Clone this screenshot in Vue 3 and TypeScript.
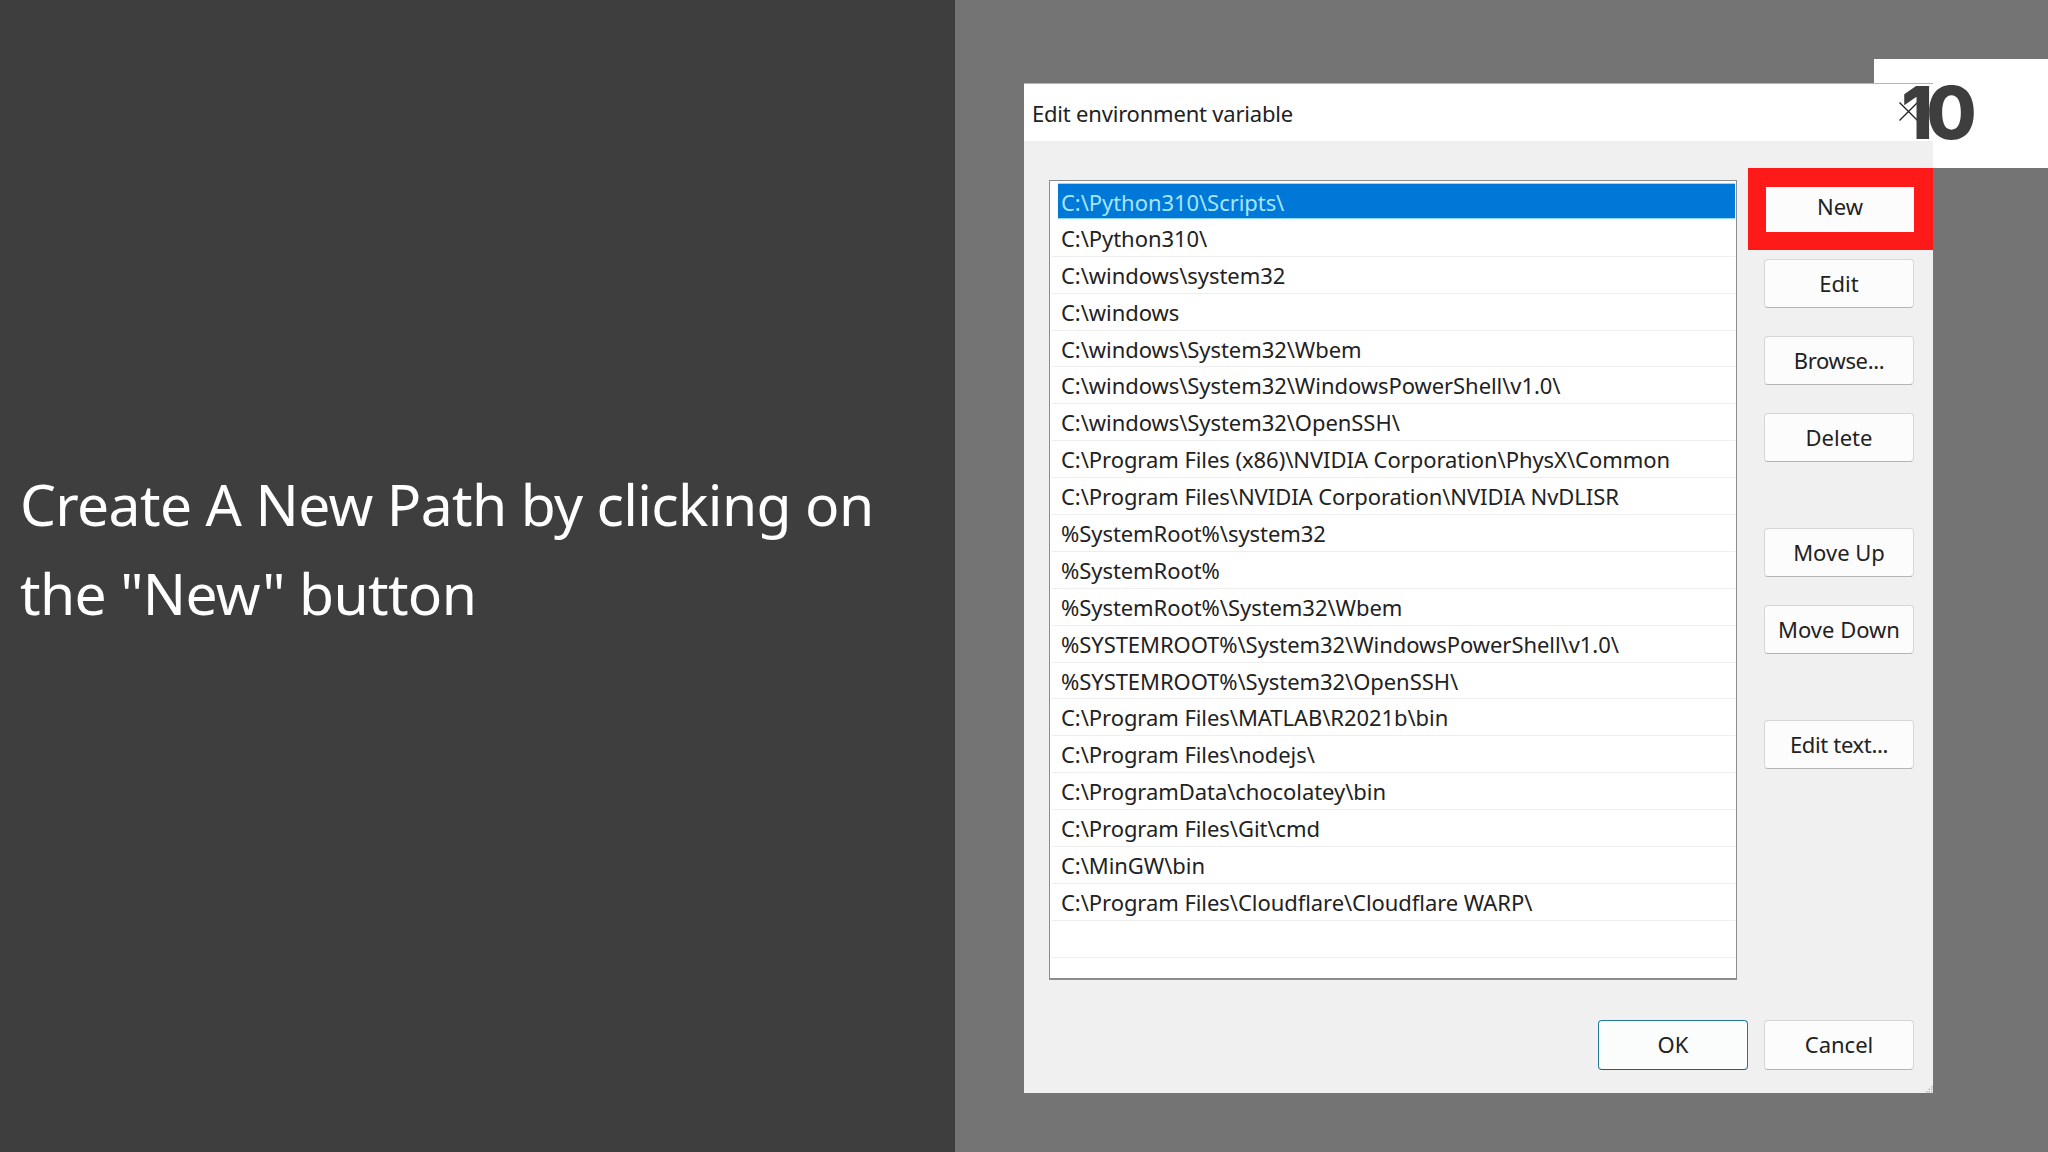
<script setup lang="ts">
const paths: string[] = [
  'C:\\Python310\\Scripts\\',
  'C:\\Python310\\',
  'C:\\windows\\system32',
  'C:\\windows',
  'C:\\windows\\System32\\Wbem',
  'C:\\windows\\System32\\WindowsPowerShell\\v1.0\\',
  'C:\\windows\\System32\\OpenSSH\\',
  'C:\\Program Files (x86)\\NVIDIA Corporation\\PhysX\\Common',
  'C:\\Program Files\\NVIDIA Corporation\\NVIDIA NvDLISR',
  '%SystemRoot%\\system32',
  '%SystemRoot%',
  '%SystemRoot%\\System32\\Wbem',
  '%SYSTEMROOT%\\System32\\WindowsPowerShell\\v1.0\\',
  '%SYSTEMROOT%\\System32\\OpenSSH\\',
  'C:\\Program Files\\MATLAB\\R2021b\\bin',
  'C:\\Program Files\\nodejs\\',
  'C:\\ProgramData\\chocolatey\\bin',
  'C:\\Program Files\\Git\\cmd',
  'C:\\MinGW\\bin',
  'C:\\Program Files\\Cloudflare\\Cloudflare WARP\\',
  '',
]
</script>

<template>
  <div class="page">
    <section class="caption">
      <h1 class="caption-text">Create A New Path by clicking on<br />the "New" button</h1>
    </section>
    <section class="stage">
      <div class="step-badge"><span class="step-number">10</span></div>
      <div class="dialog">
        <header class="titlebar">
          <span class="title">Edit environment variable</span>
          <svg class="close" viewBox="0 0 19 19" width="19" height="19" aria-hidden="true">
            <path d="M0.5 0.5 L18.5 18.5 M18.5 0.5 L0.5 18.5" fill="none" stroke="#222" stroke-width="1.3" />
          </svg>
        </header>
        <div class="body">
          <div class="main">
            <ul class="list">
              <li
                v-for="(p, i) in paths"
                :key="i"
                class="row"
                :class="{ selected: i === 0 }"
              >{{ p }}</li>
            </ul>
            <div class="actions">
              <div class="highlight"><button class="btn btn-new">New</button></div>
              <button class="btn">Edit</button>
              <button class="btn tight">Browse...</button>
              <button class="btn">Delete</button>
              <button class="btn group">Move Up</button>
              <button class="btn">Move Down</button>
              <button class="btn group tight">Edit text...</button>
            </div>
          </div>
          <footer class="footer">
            <button class="btn btn-ok">OK</button>
            <button class="btn">Cancel</button>
          </footer>
        </div>
        <svg class="grip" viewBox="0 0 8 8" width="8" height="8" aria-hidden="true">
          <path d="M6 1h1.5v1.5H6zM3.5 3.5H5V5H3.5zM6 3.5h1.5V5H6zM1 6h1.5v1.5H1zM3.5 6H5v1.5H3.5zM6 6h1.5v1.5H6z" fill="#b8b8b8" />
        </svg>
      </div>
    </section>
  </div>
</template>

<style>
html, body { margin: 0; background: #757475; }
</style>

<style scoped>
.page {
  display: flex;
  width: 2048px;
  height: 1152px;
  overflow: hidden;
  font-family: "Noto Sans", "Open Sans", sans-serif;
}
.caption {
  width: 955px;
  flex: none;
  background: #3e3e3e;
  display: flex;
  align-items: center;
  padding-left: 20px;
  box-sizing: border-box;
}
.caption-text {
  margin: 0 0 54px;
  font-family: "Noto Sans", sans-serif;
  font-weight: 400;
  font-size: 57px;
  line-height: 89px;
  letter-spacing: -0.65px;
  white-space: nowrap;
  color: #fff;
}
.stage {
  position: relative;
  flex: 1;
  background: #757475;
  padding: 83px 0 0 69px;
  box-sizing: border-box;
}
.step-badge {
  position: absolute;
  left: 919px;
  top: 59px;
  width: 174px;
  height: 109px;
  background: #fff;
}
.step-number {
  position: absolute;
  z-index: 3;
  left: 27px;
  top: 14px;
  font-family: Inter, sans-serif;
  font-weight: 800;
  font-size: 73px;
  line-height: 80px;
  letter-spacing: -7px;
  color: #3e3e3e;
}
.dialog {
  position: relative;
  z-index: 1;
  width: 909px;
  height: 1010px;
  background: #f0f0f0;
  border-top: 1px solid #b5b5b5;
  box-sizing: border-box;
  color: #222;
  font-size: 22px;
}
.grip {
  position: absolute;
  right: 0;
  bottom: 0;
}
.titlebar {
  height: 57px;
  background: #fff;
  display: flex;
  align-items: center;
  justify-content: space-between;
  padding: 0 15px 0 8px;
}
.title {
  letter-spacing: -0.2px;
}
.close {
  margin-bottom: 2px;
}
.body {
  padding: 39px 19px 0 25px;
}
.main {
  display: flex;
  align-items: flex-start;
}
.list {
  list-style: none;
  margin: 0;
  width: 688px;
  height: 800px;
  box-sizing: border-box;
  padding: 2px 1px 0 2px;
  background: #fff;
  border: 1px solid #8c8c8c;
  border-bottom-width: 2px;
  letter-spacing: -0.06px;
}
.row {
  height: 36.9px;
  box-sizing: border-box;
  padding-left: 9px;
  line-height: 37px;
  border-bottom: 1px solid #eeeeee;
  white-space: nowrap;
}
.selected {
  margin-left: 6px;
  padding-left: 3px;
  height: 36px;
  background: #0078d7;
  color: #a6e6fb;
  border-top: 1px solid #8fdcf0;
  border-bottom: 1px solid #8fdcf0;
  margin-bottom: 0.9px;
}
.actions {
  width: 150px;
  margin: -12px 0 0 27px;
  display: flex;
  flex-direction: column;
  gap: 28px;
}
.highlight {
  margin: 0 -19px -19px -16px;
  padding: 19px 19px 18px 18px;
  background: #ff1a1a;
}
.btn {
  width: 150px;
  height: 49px;
  padding: 0 0 2px;
  box-sizing: border-box;
  background: #fcfcfc;
  border: 1px solid #d6d6d6;
  border-bottom-color: #b4b4b4;
  border-radius: 4px;
  font: inherit;
  color: #222;
}
.tight {
  letter-spacing: -0.35px;
}
.btn-new {
  width: 148px;
  height: 45px;
  padding-bottom: 8px;
  border: 0;
  border-radius: 0;
  display: block;
}
.group {
  margin-top: 38px;
}
.footer {
  display: flex;
  justify-content: flex-end;
  gap: 16px;
  margin-top: 40px;
}
.footer .btn {
  height: 50px;
  padding-bottom: 2px;
}
.footer .btn-ok {
  border: 1.5px solid #1f7a99;
  border-bottom-color: #14627f;
  background: #fbfcfc;
}
</style>
